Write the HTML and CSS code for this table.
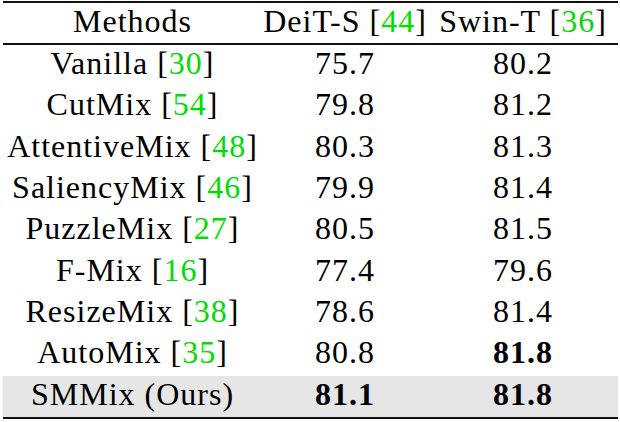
FILE: index.html
```html
<!DOCTYPE html>
<html lang="en">

<head>
    <meta charset="UTF-8">
    <title>Mixing methods - top-1 accuracy</title>
    <link rel="stylesheet" href="styles.css">
</head>

<body>
    <table class="results">
        <thead>
            <tr>
                <th class="col-method">Methods</th>
                <th class="col-deit">DeiT-S [<span class="cite">44</span>]</th>
                <th class="col-swin">Swin-T [<span class="cite">36</span>]</th>
            </tr>
        </thead>
        <tbody>
            <tr>
                <td>Vanilla [<span class="cite">30</span>]</td>
                <td>75.7</td>
                <td>80.2</td>
            </tr>
            <tr>
                <td>CutMix [<span class="cite">54</span>]</td>
                <td>79.8</td>
                <td>81.2</td>
            </tr>
            <tr>
                <td>AttentiveMix [<span class="cite">48</span>]</td>
                <td>80.3</td>
                <td>81.3</td>
            </tr>
            <tr>
                <td>SaliencyMix [<span class="cite">46</span>]</td>
                <td>79.9</td>
                <td>81.4</td>
            </tr>
            <tr>
                <td>PuzzleMix [<span class="cite">27</span>]</td>
                <td>80.5</td>
                <td>81.5</td>
            </tr>
            <tr>
                <td>F-Mix [<span class="cite">16</span>]</td>
                <td>77.4</td>
                <td>79.6</td>
            </tr>
            <tr>
                <td>ResizeMix [<span class="cite">38</span>]</td>
                <td>78.6</td>
                <td>81.4</td>
            </tr>
            <tr>
                <td>AutoMix [<span class="cite">35</span>]</td>
                <td>80.8</td>
                <td class="best">81.8</td>
            </tr>
            <tr class="ours">
                <td>SMMix (Ours)</td>
                <td class="best">81.1</td>
                <td class="best">81.8</td>
            </tr>
        </tbody>
    </table>
</body>

</html>
```

FILE: styles.css
```css
* {
    margin: 0;
    padding: 0;
    box-sizing: border-box;
}

body {
    background-color: #fff;
    color: #000;
    font-family: 'Liberation Serif', 'Times New Roman', serif;
    font-size: 32px;
}

.results {
    width: 615px;
    margin: 1px 0 0 3px;
    border-collapse: separate;
    border-spacing: 0;
    table-layout: fixed;
    border-top: 2px solid #111;
    border-bottom: 2px solid #111;
}

.results th,
.results td {
    text-align: center;
    vertical-align: top;
    font-weight: normal;
    line-height: 36px;
    letter-spacing: 1px;
    white-space: nowrap;
    padding: 0;
}

.results th {
    height: 42px;
    border-bottom: 2px solid #111;
}

.results td {
    height: 41.33px;
}

.col-method {
    width: 259px;
}

.col-deit {
    width: 166px;
}

.col-swin {
    width: 190px;
}

.cite {
    color: #00dd00;
}

.results .best {
    font-weight: bold;
}

.ours {
    background-color: #e6e6e6;
}
```
